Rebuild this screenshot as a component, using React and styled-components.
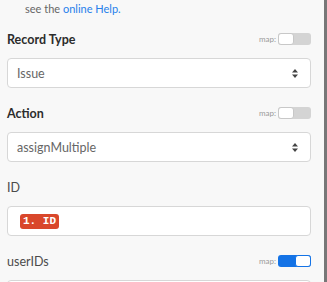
import React from "react";
import styled, { createGlobalStyle } from "styled-components";

const Global = createGlobalStyle`
  html, body { margin: 0; padding: 0; background: #f8f8f8; }
  body { font-family: "Lato", "Open Sans", sans-serif; }
`;

const Panel = styled.div`
  width: 327px;
  height: 282px;
  box-sizing: border-box;
  border-right: 3px solid #777;
  background: #f8f8f8;
  padding: 0 13px 0 7px;
  overflow: hidden;
`;

const Hint = styled.div`
  height: 18px;
  line-height: 18px;
  padding-left: 18px;
  font-size: 11px;
  color: #666;
  a { color: #2680eb; text-decoration: none; }
`;

const Group = styled.div`
  margin-top: ${(p) => (p.$first ? "11px" : "15px")};
`;

const LabelRow = styled.div`
  height: 20px;
  display: flex;
  align-items: center;
  justify-content: space-between;
  margin-bottom: 9px;
`;

const Label = styled.span`
  font-size: 12.5px;
  font-weight: ${(p) => (p.$bold ? 700 : 400)};
  color: ${(p) => (p.$bold ? "#2c2c2c" : "#4b4b4b")};
`;

const MapWrap = styled.div`
  display: flex;
  align-items: center;
  gap: 2px;
  font-size: 8px;
  color: #9a9a9a;
`;

const Toggle = styled.div`
  width: 33px;
  height: 12px;
  box-sizing: border-box;
  border-radius: 3px;
  background: ${(p) => (p.$on ? "#1473e6" : "#d4d4d4")};
  display: flex;
  justify-content: ${(p) => (p.$on ? "flex-end" : "flex-start")};
`;

const Knob = styled.div`
  width: 16px;
  height: 12px;
  box-sizing: border-box;
  border-radius: 3px;
  background: #fff;
  border: 1px solid ${(p) => (p.$on ? "#1473e6" : "#c8c8c8")};
`;

const Box = styled.div`
  height: 30px;
  box-sizing: border-box;
  background: #fff;
  border: 1px solid #d7d7d7;
  border-radius: 4px;
  display: flex;
  align-items: center;
  justify-content: space-between;
  padding: 0 12px 0 9px;
  font-size: 12.5px;
  color: #666;
`;

const Tag = styled.span`
  margin-left: 3px;
  height: 15px;
  line-height: 15px;
  padding: 0 3px;
  border-radius: 3px;
  background: #d9472b;
  color: #fff;
  font-family: "Liberation Mono", monospace;
  font-weight: 700;
  font-size: 11px;
`;

const Arrows = () => (
  <svg width="6" height="9" viewBox="0 0 6 9">
    <path d="M3 0 L6 3.5 H0 Z M0 5.5 H6 L3 9 Z" fill="#444" />
  </svg>
);

const MapToggle = ({ on }) => (
  <MapWrap>
    map:
    <Toggle $on={on}>
      <Knob $on={on} />
    </Toggle>
  </MapWrap>
);

export default function App() {
  return (
    <>
      <Global />
      <Panel>
        <Hint>
          see the <a href="#">online Help.</a>
        </Hint>
        <Group $first>
          <LabelRow>
            <Label $bold>Record Type</Label>
            <MapToggle />
          </LabelRow>
          <Box>
            Issue
            <Arrows />
          </Box>
        </Group>
        <Group>
          <LabelRow>
            <Label $bold>Action</Label>
            <MapToggle />
          </LabelRow>
          <Box>
            assignMultiple
            <Arrows />
          </Box>
        </Group>
        <Group>
          <LabelRow>
            <Label>ID</Label>
          </LabelRow>
          <Box>
            <Tag>1. ID</Tag>
          </Box>
        </Group>
        <Group>
          <LabelRow>
            <Label>userIDs</Label>
            <MapToggle on />
          </LabelRow>
          <Box />
        </Group>
      </Panel>
    </>
  );
}
